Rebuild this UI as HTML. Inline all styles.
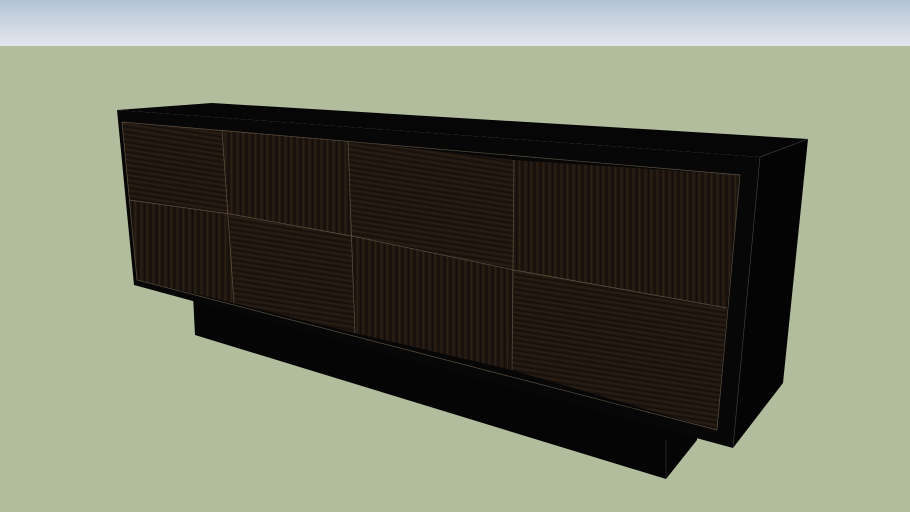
<!DOCTYPE html>
<html><head><meta charset="utf-8"><style>
html,body{margin:0;padding:0;width:910px;height:512px;overflow:hidden;background:#b1bd9d}
svg{display:block}
</style></head><body>
<svg width="910" height="512" viewBox="0 0 910 512" xmlns="http://www.w3.org/2000/svg">
<defs>
<linearGradient id="sky" x1="0" y1="0" x2="0" y2="1">
<stop offset="0" stop-color="#b3c4d6"/><stop offset="1" stop-color="#e4e7ed"/>
</linearGradient>
<pattern id="vg" width="6" height="20" patternUnits="userSpaceOnUse">
<rect width="6" height="20" fill="#231911"/>
<rect x="0" width="1.5" height="20" fill="#140e0a"/>
<rect x="3" width="1" height="20" fill="#2d2116"/>
<rect x="4.5" width="1" height="20" fill="#1a130d"/>
</pattern>
<pattern id="hg" width="20" height="5" patternUnits="userSpaceOnUse" patternTransform="rotate(9)">
<rect width="20" height="5" fill="#231911"/>
<rect y="0" width="20" height="1.2" fill="#140e0a"/>
<rect y="2.5" width="20" height="0.8" fill="#2d2116"/>
<rect y="3.8" width="20" height="0.7" fill="#1a130d"/>
</pattern>
</defs>
<rect width="910" height="46" fill="url(#sky)"/>
<rect y="46" width="910" height="466" fill="#b1bd9d"/>
<polygon points="193,295 697,430 697,440 666,479 195,335" fill="#050505"/>
<line x1="666" y1="440" x2="666" y2="479" stroke="#333" stroke-width="0.7"/>
<polygon points="117,110 212,103 808,139 760,157" fill="#060606"/>
<polygon points="760,157 808,139 783,383 733,448" fill="#040404"/>
<polygon points="117,110 760,157 733,448 134,285" fill="#080707"/>
<line x1="760" y1="157" x2="808" y2="139" stroke="#444" stroke-width="0.6"/>
<line x1="760" y1="157" x2="733" y2="448" stroke="#444" stroke-width="0.6"/>
<polygon points="122,122 222,130 230,214 129,200" fill="url(#hg)"/>
<polygon points="222,130 348,141 352,236 230,214" fill="url(#vg)"/>
<polygon points="348,141 514,160 514,270 352,236" fill="url(#hg)"/>
<polygon points="514,160 740,175 727,308 514,270" fill="url(#vg)"/>
<polygon points="129,200 230,214 234,303 137,280" fill="url(#vg)"/>
<polygon points="230,214 352,236 355,333 234,303" fill="url(#hg)"/>
<polygon points="352,236 514,270 512,370 355,333" fill="url(#vg)"/>
<polygon points="514,270 727,308 717,430 512,370" fill="url(#hg)"/>
<g stroke="#7a6c58" stroke-width="0.7" fill="none" opacity="0.7">
<polygon points="122,122 740,175 717,430 137,280"/>
<polyline points="129,200 230,214 352,236 514,270 727,308"/>
<line x1="222" y1="130" x2="234" y2="303"/>
<line x1="348" y1="141" x2="355" y2="333"/>
<line x1="514" y1="160" x2="512" y2="370"/>
</g>
</svg>
</body></html>
